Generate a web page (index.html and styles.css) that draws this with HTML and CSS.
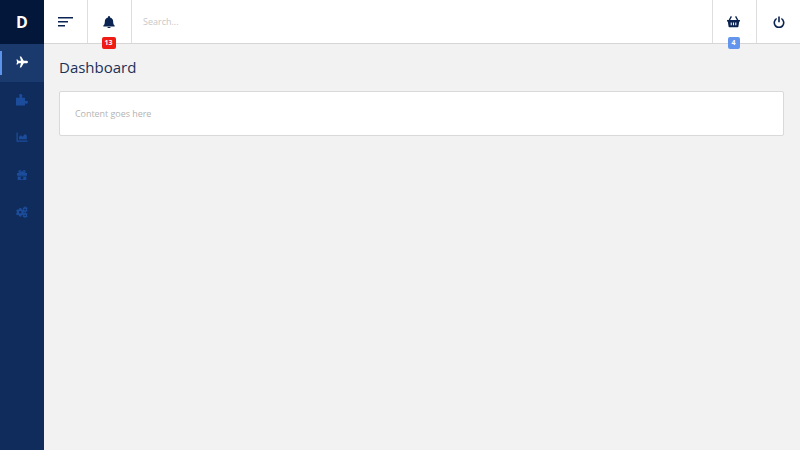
FILE: index.html
```html
<!DOCTYPE html>
<html lang="en">
<head>
<meta charset="utf-8">
<title>Dashboard</title>
<link rel="stylesheet" href="styles.css">
</head>
<body>
<div class="app">
  <aside class="sidebar">
    <div class="logo">D</div>
    <nav class="nav">
      <a class="nav-item active">
        <svg class="nav-icon" viewBox="0 0 24 24"><path d="M24 12c0-1.500-1.800-2.500-3.300-2.500h-5.200L10.300 1H7.500l2.500 8.500H5L3 7H.8l1.400 5-1.400 5H3l2-2.500h5L7.500 23h2.800l5.200-8.500h5.200c1.500 0 3.300-1 3.300-2.500z"/></svg>
      </a>
      <a class="nav-item">
        <svg class="nav-icon" viewBox="0 0 24 24"><path d="M9 0c2.200 0 3.800 1.400 3.800 3.200 0 1.100-.9 1.800-.9 2.700 0 .8.500 1.600 1.600 1.600H18v5.300c0 .8.500 1.200 1 1.200.7 0 1.200-.7 2-.7 1.600 0 3 1.300 3 3s-1.400 3-3 3c-.8 0-1.300-.7-2-.7-.5 0-1 .5-1 1.200V23H0V7.500h5.500c1.100 0 1.600-.8 1.600-1.600 0-.9-.9-1.600-.9-2.700C6.200 1.400 7 0 9 0z"/></svg>
      </a>
      <a class="nav-item">
        <svg class="nav-icon" viewBox="0 0 24 24"><path d="M1 3h2.500v16H23v2.500H1z"/><path d="M6 16.500V12l3.500-3.500 3.500 3L18 6l3.500 3v7.500z"/></svg>
      </a>
      <a class="nav-item">
        <svg class="nav-icon" viewBox="0 0 24 24"><path fill-rule="evenodd" d="M2 8h20v5.500H2zM3.300 15h17.400v5.300A1.700 1.700 0 0 1 19 22H5a1.700 1.700 0 0 1-1.700-1.700zM7.500 2c2 0 3.500 1.800 4.500 4.500C13 3.800 14.500 2 16.500 2a3 3 0 0 1 0 6h-9a3 3 0 0 1 0-6zm0 2.300a.8.8 0 0 0 0 1.500h2c-.6-1-1.300-1.500-2-1.500zm9 0c-.7 0-1.400.5-2 1.500h2a.8.8 0 0 0 0-1.500z"/><path class="gift-hole" d="M9.500 15.500h5v5h-5z"/></svg>
      </a>
      <a class="nav-item">
        <svg class="nav-icon" viewBox="0 0 24 24"><path fill-rule="evenodd" d="M6.500 4h4l.5 2.300 1.800 1 2.300-.7 2 3.400-1.700 1.600v2l1.700 1.600-2 3.400-2.300-.7-1.800 1-.5 2.300h-4l-.5-2.300-1.800-1-2.300.7-2-3.400L2 13.600v-2L.3 10l2-3.400 2.300.7 1.800-1zm2 6a2.500 2.500 0 1 0 0 5 2.500 2.500 0 0 0 0-5z"/><path fill-rule="evenodd" d="M18 1h2.500l.4 1.300 1.300.8 1.300-.4.500 2.500-1 1 0 1.500 1 1-.5 2.500-1.300-.4-1.300.8-.4 1.300H18l-.4-1.300-1.300-.8-1.300.4-.5-2.500 1-1V6.700l-1-1 .5-2.500 1.300.4 1.300-.8zm1.200 4.500a1.800 1.800 0 1 0 0 3.600 1.800 1.800 0 0 0 0-3.600z" transform="translate(-1 0)"/><path fill-rule="evenodd" d="M18 14h2.500l.4 1.100 1.300.7 1.300-.3.500 2.200-1 1v1.300l1 .9-.5 2.200-1.300-.3-1.300.7-.4 1.100H18l-.4-1.100-1.300-.7-1.300.3-.5-2.200 1-.9v-1.300l-1-1 .5-2.200 1.300.3 1.300-.7zm1.200 3.800a1.500 1.500 0 1 0 0 3 1.500 1.500 0 0 0 0-3z" transform="translate(-1 -1)"/></svg>
      </a>
    </nav>
  </aside>
  <div class="main">
    <header class="topbar">
      <button class="tool" aria-label="Menu">
        <svg class="menu-icon" viewBox="0 0 15 10"><path d="M0 0h15v1.500H0zM0 4h10v1.500H0zM0 8h7v1.500H0z"/></svg>
      </button>
      <button class="tool" aria-label="Notifications">
        <svg class="tool-icon bell" viewBox="0 0 24 24"><path d="M12 0a2 2 0 0 1 2 2v1C18 3.800 20.300 7 20.300 11c0 5 1.300 6.500 2.900 8 .6.700.2 2-.9 2H1.700c-1.100 0-1.500-1.300-.9-2 1.600-1.500 2.900-3 2.900-8C3.700 7 6 3.800 10 3V2a2 2 0 0 1 2-2zM9 22h6a3 3 0 0 1-6 0z"/></svg>
        <span class="badge badge-red">13</span>
      </button>
      <div class="search">Search...</div>
      <button class="tool tool-right" aria-label="Basket">
        <svg class="basket" viewBox="0 0 24 24"><path fill-rule="evenodd" d="M7 2l2.200 1.200L5.800 9h12.400l-3.400-5.800L17 2l4 7h2.300a.7.700 0 0 1 .7.700v1.800a.7.700 0 0 1-.7.700h-.8l-1.400 9a1.500 1.500 0 0 1-1.500 1.300H4.400a1.500 1.500 0 0 1-1.500-1.300l-1.400-9H.7a.7.700 0 0 1-.7-.7V9.700A.7.700 0 0 1 .7 9H3zM6.800 14v5h2v-5zm4.200 0v5h2v-5zm4.200 0v5h2v-5z"/></svg>
        <span class="badge badge-blue">4</span>
      </button>
      <button class="tool tool-right tool-last" aria-label="Power">
        <svg class="tool-icon" viewBox="0 0 24 24"><path d="M10.400 1h3.200v11.500h-3.200z"/><path d="M7.300 3.500v3.600a7.800 7.800 0 1 0 9.400 0V3.500a11 11 0 1 1-9.400 0z"/></svg>
      </button>
    </header>
    <main class="content">
      <h1 class="title">Dashboard</h1>
      <section class="card">Content goes here</section>
    </main>
  </div>
</div>
</body>
</html>
```
FILE: styles.css
```css
* { box-sizing: border-box; }
html, body { margin: 0; height: 100%; }
body { font-family: "Open Sans", sans-serif; background: #f2f2f2; overflow: hidden; }
.app { display: flex; height: 450px; }
.sidebar { width: 44px; flex: none; background: #0f2c5c; display: flex; flex-direction: column; }
.logo { height: 44px; background: #03173a; color: #fff; font-weight: 700; font-size: 16px; display: flex; align-items: center; justify-content: center; }
.nav { display: flex; flex-direction: column; }
.nav-item { height: 37.500px; display: flex; align-items: center; justify-content: center; position: relative; fill: #1c4c9c; }
.nav-item.active { background: #1a3a6e; fill: #fff; }
.nav-item.active::before { content: ""; position: absolute; left: 0; top: 7px; bottom: 7px; width: 2px; background: #5b94ea; }
.nav-icon { width: 12px; height: 12px; margin: -1px 0 0 -1px; }
.gift-hole { fill: #0f2c5c; }
.main { flex: 1; min-width: 0; display: flex; flex-direction: column; }
.topbar { height: 44px; flex: none; background: #fff; border-bottom: 1px solid #d6d6d6; display: flex; align-items: stretch; }
.tool { width: 44px; flex: none; padding: 0; background: none; border: 0; border-right: 1px solid #dedede; position: relative; display: flex; align-items: center; justify-content: center; fill: #0b2350; }
.tool-right { border-right: 0; border-left: 1px solid #dedede; }
.menu-icon { width: 15px; height: 10px; }
.tool-icon { width: 12px; height: 12px; }
.bell { margin-right: 1px; }
.basket { width: 13px; height: 13px; margin-right: 2px; }
.search { flex: 1; padding: 0 12px 0 11px; font-size: 9px; color: #c8c8c8; display: flex; align-items: center; margin-top: -1px; }
.badge { position: absolute; top: 37px; left: 50%; transform: translateX(-50%); height: 12px; min-width: 12px; padding: 0 3px; border-radius: 2px; color: #fff; font-size: 7px; font-weight: 700; line-height: 12px; text-align: center; font-family: "Open Sans", sans-serif; z-index: 1; }
.badge-red { background: #ee1c14; margin-left: -1px; }
.badge-blue { background: #6495ed; margin-left: -1px; }
.content { flex: 1; padding: 0 16px 0 15px; }
.title { margin: 12px 0 13px; font-size: 15px; line-height: 22px; font-weight: 400; color: #1c3157; }
.card { background: #fff; border: 1px solid #d9d9d9; border-radius: 2px; height: 45px; padding: 0 15px; display: flex; align-items: center; font-size: 9px; letter-spacing: -0.050px; color: #b4b4b4; }
```
